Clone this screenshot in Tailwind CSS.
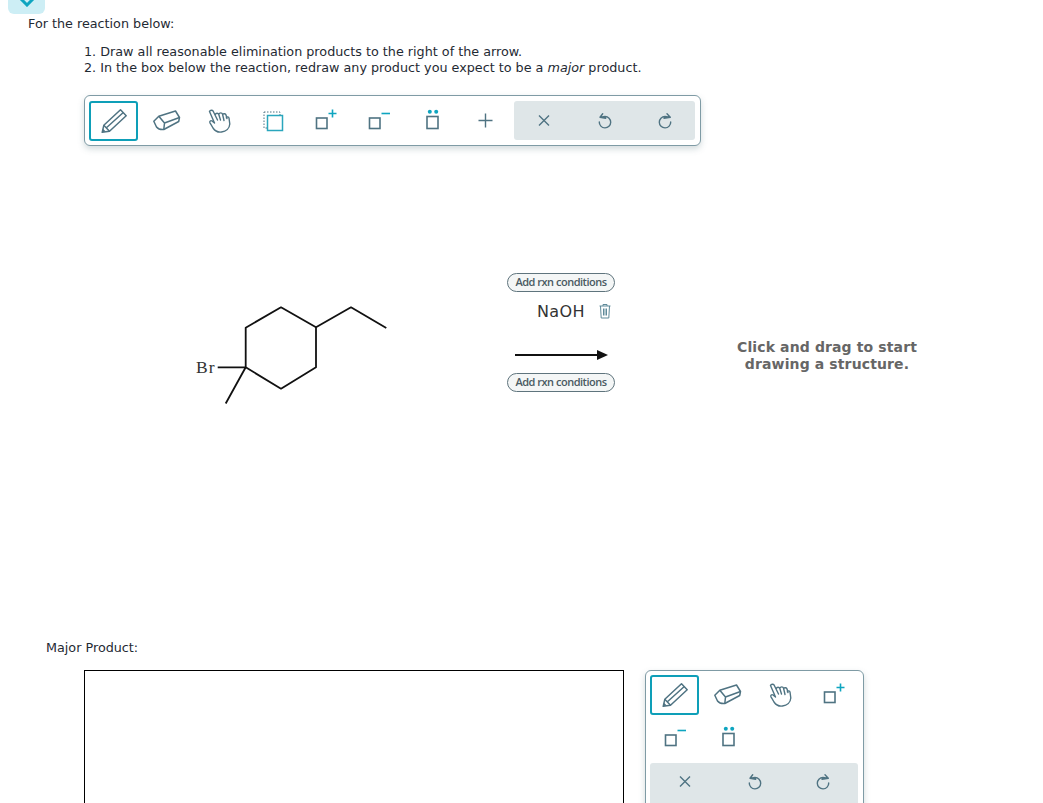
<!doctype html>
<html><head><meta charset="utf-8"><script src="https://cdn.jsdelivr.net/npm/@tailwindcss/browser@4"></script></head>
<body class="bg-white">
<svg width="0" height="0" class="absolute">
<defs>
<symbol id="pencil" viewBox="0 0 32 32"><g fill="none" stroke="#4f7382" stroke-width="1.500" stroke-linejoin="round"><path d="M5.800 20.300 22.500 4.700l5.700 6-16.700 15.600-7.300 1z"/><path d="M5.800 20.300l5.700 6M8.700 22.500 25.300 7.500"/></g><path d="M4.200 27.300l.8-3.500 2.700 2.800z" fill="#4f7382"/></symbol>
<symbol id="eraser" viewBox="0 0 32 32"><g fill="none" stroke="#4f7382" stroke-width="1.500" stroke-linejoin="round"><path d="M2.800 16.300 7.800 11.300 24.500 6 28.500 12.500 27.700 16.500 12.800 24.500Q8 25 5.500 22Z"/><path d="M7.800 11.300 13.500 18 12.800 24.500M13.500 18 28.500 12.500"/></g></symbol>
<symbol id="hand" viewBox="0 0 32 32"><path d="M10.500 18 8 16c-1.200-1-2.800.3-2 1.800L9 23c2 3 5 4.500 8.500 4 4.500-.5 8-3.500 8.300-8l-.8-6c-.2-1.500-2.200-1.500-2.700-.2M5.500 6.500c.7-1.700 2.800-1.700 3.700-.3L13.500 15M5.500 6.500 10.500 18M11.300 9.500c.5-1.700 3-1.700 3.500 0L16.500 15M15 9c.5-1.500 3-1.500 3.500 0L20 15.500M18.800 9.500c.7-1.300 2.800-1 3.200.5l1 3.500" fill="none" stroke="#4f7382" stroke-width="1.400" stroke-linecap="round" stroke-linejoin="round"/></symbol>
<symbol id="boxsel" viewBox="0 0 32 32"><rect x="7" y="7" width="16" height="16" fill="none" stroke="#4f7382" stroke-width="1" stroke-dasharray="1.500 1.500"/><rect x="10.500" y="10.500" width="15" height="15" fill="#fff" stroke="#2aa6bd" stroke-width="1.500"/></symbol>
<symbol id="plusc" viewBox="0 0 32 32"><rect x="6.500" y="13" width="10.500" height="10.500" fill="none" stroke="#4f7382" stroke-width="1.600"/><path d="M22.500 4.500v8M18.500 8.500h8" stroke="#0ea5c0" stroke-width="1.600"/></symbol>
<symbol id="minusc" viewBox="0 0 32 32"><rect x="6.500" y="13" width="10.500" height="10.500" fill="none" stroke="#4f7382" stroke-width="1.600"/><path d="M18.500 8.500h8.500" stroke="#0ea5c0" stroke-width="1.600"/></symbol>
<symbol id="lone" viewBox="0 0 32 32"><rect x="11" y="11.500" width="11" height="12" fill="none" stroke="#4f7382" stroke-width="1.600"/><circle cx="13.800" cy="6.800" r="2" fill="#0ea5c0"/><circle cx="20.200" cy="6.800" r="2" fill="#0ea5c0"/></symbol>
<symbol id="cross" viewBox="0 0 32 32"><path d="M11 10.500l10 10M21 10.500l-10 10" stroke="#4f7382" stroke-width="1.400" fill="none"/></symbol>
<symbol id="addplus" viewBox="0 0 32 32"><path d="M16.500 8.500v14M9.500 15.500h14" stroke="#4f7382" stroke-width="1.400" fill="none"/></symbol>
<symbol id="undo" viewBox="0 0 32 32"><path d="M12.500 12.200 17 11.500A5.700 5.700 0 1 1 11.300 17M14.700 8.800 12 12.200 17.700 13.200" fill="none" stroke="#4f7382" stroke-width="1.400" stroke-linecap="round" stroke-linejoin="round"/></symbol>
<symbol id="redo" viewBox="0 0 32 32"><path d="M20.800 12.200 16 11.500A5.700 5.700 0 1 0 21.700 17M18 8.800 21.300 12.200 15 13.200" fill="none" stroke="#4f7382" stroke-width="1.400" stroke-linecap="round" stroke-linejoin="round"/></symbol>
</defs>
</svg>
<div class="relative w-[1043px] h-[803px] overflow-hidden text-[12.75px] leading-4 text-[#1f2a33] font-['DejaVu_Sans',sans-serif]">
  <div class="absolute left-2 top-0 w-[37px] h-[14px] bg-[#cdeef5] rounded-b-md flex justify-center">
    <svg width="16" height="7" viewBox="0 0 16 7"><path d="M2 -1l6 6L14 -1" fill="none" stroke="#0ea5c0" stroke-width="3"/></svg>
  </div>
  <div class="pt-4 pl-7 h-11">For the reaction below:</div>
  <ol class="pl-[84px] m-0">
    <li>1. Draw all reasonable elimination products to the right of the arrow.</li>
    <li>2. In the box below the reaction, redraw any product you expect to be a <i>major</i> product.</li>
  </ol>
  <div class="ml-[84px] mt-[19px] w-[617px] h-[51px] border border-[#7f9ba5] rounded-md shadow-[0_3px_6px_rgba(80,110,120,0.25)] flex items-center pl-1 pr-[5px] bg-white">
    <div class="flex gap-1 items-center">
      <div class="w-[49px] h-10 border-2 border-[#0e9fb8] rounded-[3px] flex items-center justify-center"><svg class="w-8 h-8"><use href="#pencil"/></svg></div>
      <div class="w-[49px] h-10 flex items-center justify-center"><svg class="w-8 h-8"><use href="#eraser"/></svg></div>
      <div class="w-[49px] h-10 flex items-center justify-center"><svg class="w-8 h-8"><use href="#hand"/></svg></div>
      <div class="w-[49px] h-10 flex items-center justify-center"><svg class="w-8 h-8"><use href="#boxsel"/></svg></div>
      <div class="w-[49px] h-10 flex items-center justify-center"><svg class="w-8 h-8"><use href="#plusc"/></svg></div>
      <div class="w-[49px] h-10 flex items-center justify-center"><svg class="w-8 h-8"><use href="#minusc"/></svg></div>
      <div class="w-[49px] h-10 flex items-center justify-center"><svg class="w-8 h-8"><use href="#lone"/></svg></div>
      <div class="w-[49px] h-10 flex items-center justify-center"><svg class="w-8 h-8"><use href="#addplus"/></svg></div>
    </div>
    <div class="ml-[5px] w-[181px] h-[39px] bg-[#dfe6e8] rounded-[3px] grid grid-cols-3 items-center justify-items-center">
      <svg class="w-8 h-8"><use href="#cross"/></svg>
      <svg class="w-8 h-8"><use href="#undo"/></svg>
      <svg class="w-8 h-8"><use href="#redo"/></svg>
    </div>
  </div>
  <div class="relative h-[493px]">
    <svg class="absolute left-0 top-0" width="1043" height="493" viewBox="0 146 1043 493">
      <g fill="none" stroke="#111" stroke-width="1.800" stroke-linejoin="round">
        <path d="M245.700 327.700 281 307.300 316 327.300V367.300L281 388.700 245.700 367.300Z"/>
        <path d="M316 327.300 351 307.300 386.300 328M217.700 367.300H245.700L225.700 403.500"/>
      </g>
      <path d="M515 355H598" stroke="#111" stroke-width="2"/>
      <path d="M597 350 608 355 597 360Z" fill="#111"/>
      <text x="196" y="373.300" font-family="Liberation Serif" font-size="17.500" letter-spacing="1" fill="#333">Br</text>
    </svg>
    <div class="absolute left-[507px] top-[127px] w-[108px] h-[19px] pb-px rounded-full border border-[#5f747d] bg-[#f4f6f6] flex items-center justify-center font-['Open_Sans',sans-serif] font-semibold text-[11px] tracking-[-0.5px] text-[#4a5a62]">Add rxn conditions</div>
    <div class="absolute left-[537px] top-[156px] text-base leading-5 tracking-[0.4px] text-[#333]">NaOH</div>
    <svg class="absolute left-[598px] top-[157px]" width="14" height="16" viewBox="0 0 14 16"><path d="M1.500 3h11M5 3V1.500h4V3M2.500 3l.7 12h7.600l.7-12M5.500 5.500v7M7 5.500v7M8.500 5.500v7" fill="none" stroke="#5f8a99" stroke-width="1"/></svg>
    <div class="absolute left-[507px] top-[227px] w-[108px] h-[19px] pb-px rounded-full border border-[#5f747d] bg-[#f4f6f6] flex items-center justify-center font-['Open_Sans',sans-serif] font-semibold text-[11px] tracking-[-0.5px] text-[#4a5a62]">Add rxn conditions</div>
    <div class="absolute left-[727px] top-[193px] w-[200px] text-center text-sm leading-[17px] font-bold tracking-[0.12px] text-[#666]">Click and drag to start<br>drawing a structure.</div>
  </div>
  <div class="pl-[46px] pt-px h-[31px]">Major Product:</div>
  <div class="flex ml-[84px] gap-[21px]">
    <div class="w-[540px] h-[200px] border border-black bg-white"></div>
    <div class="w-[219px] h-[200px] border border-[#7f9ba5] rounded-md shadow-[0_3px_6px_rgba(80,110,120,0.25)] pl-1 pr-[5px] pt-1 bg-white">
      <div class="grid grid-cols-[49px_49px_49px_49px] gap-x-1 gap-y-[3px]">
        <div class="h-10 border-2 border-[#0e9fb8] rounded-[3px] flex items-center justify-center"><svg class="w-8 h-8"><use href="#pencil"/></svg></div>
        <div class="h-10 flex items-center justify-center"><svg class="w-8 h-8"><use href="#eraser"/></svg></div>
        <div class="h-10 flex items-center justify-center"><svg class="w-8 h-8"><use href="#hand"/></svg></div>
        <div class="h-10 flex items-center justify-center"><svg class="w-8 h-8"><use href="#plusc"/></svg></div>
        <div class="h-10 flex items-center justify-center"><svg class="w-8 h-8"><use href="#minusc"/></svg></div>
        <div class="h-10 flex items-center justify-center"><svg class="w-8 h-8"><use href="#lone"/></svg></div>
      </div>
      <div class="mt-[5px] w-[208px] h-[60px] bg-[#dfe6e8] rounded-[3px] grid grid-cols-3 items-start justify-items-center pt-[3px]">
        <svg class="w-8 h-8"><use href="#cross"/></svg>
        <svg class="w-8 h-8"><use href="#undo"/></svg>
        <svg class="w-8 h-8"><use href="#redo"/></svg>
      </div>
    </div>
  </div>
</div>
</body></html>
